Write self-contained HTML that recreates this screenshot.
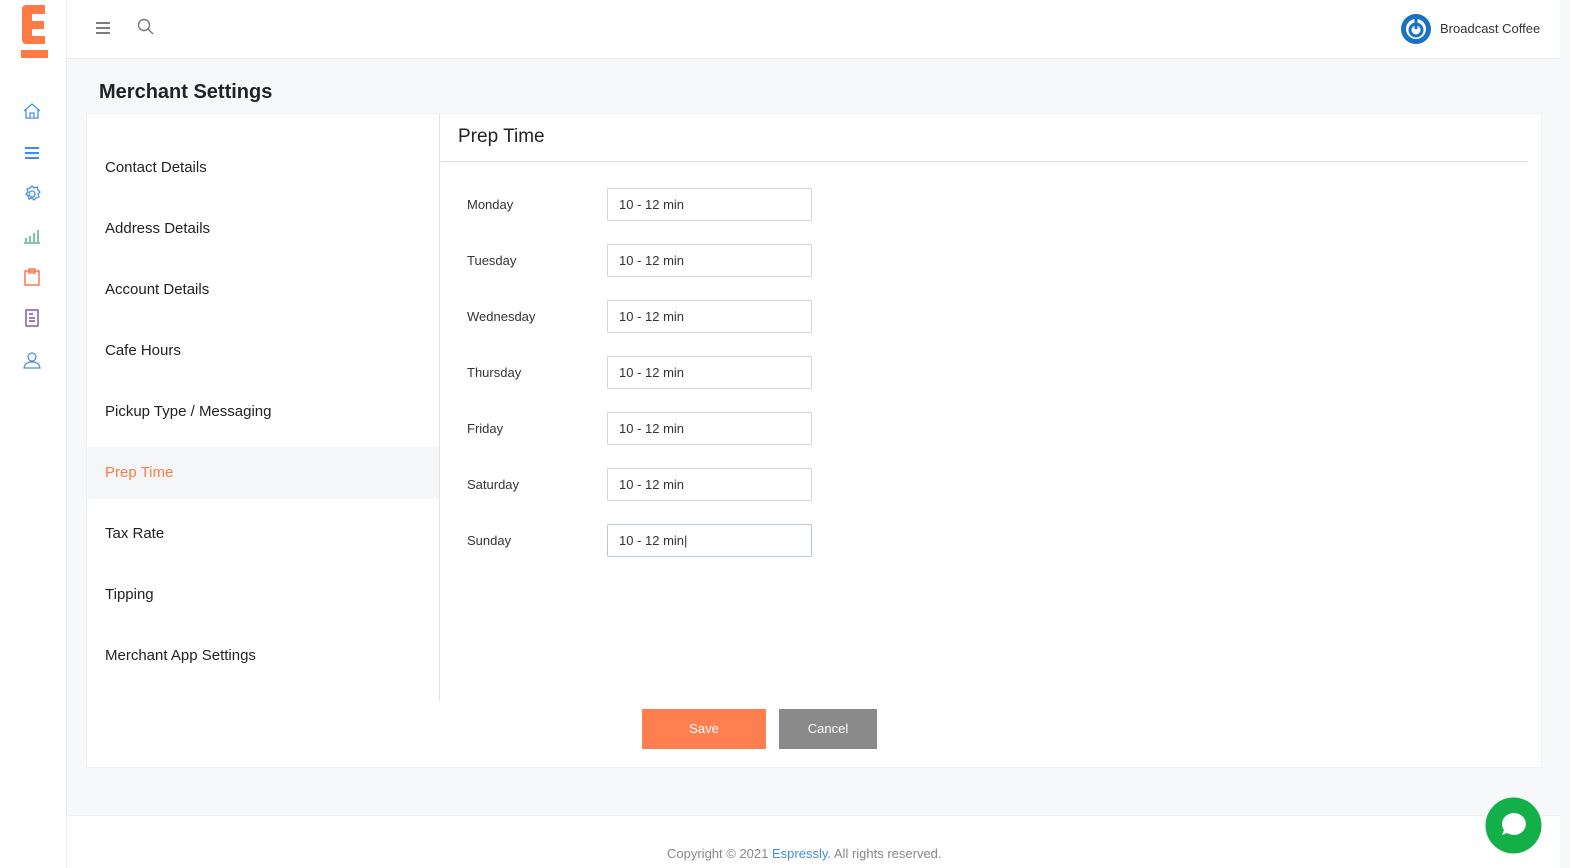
<!DOCTYPE html>
<html><head><meta charset="utf-8"><style>
*{box-sizing:border-box;margin:0;padding:0}
body{width:1570px;height:868px;overflow:hidden;background:#f7f8fa;font-family:"Liberation Sans",Arial,sans-serif;color:#222;position:relative}
.side{position:absolute;left:0;top:0;width:67px;height:868px;background:#fff;border-right:1px solid #eceef2}
.top{position:absolute;left:67px;top:0;width:1493px;height:59px;background:#fff;border-bottom:1px solid #eceef2}
.ic{position:absolute;left:22px}
.card{position:absolute;left:86px;top:113px;width:1456px;height:655px;background:#fff;border:1px solid #eef0f3}
.menu{position:absolute;left:0;top:0;width:353px;height:587px;border-right:1px solid #e3e3e3}
.mi{position:absolute;left:0;width:352px;height:52px;line-height:52px;padding-left:18px;font-size:15px;color:#222}
.row{position:absolute;left:380px;font-size:13px;color:#333}
.inp{position:absolute;left:520px;width:205px;height:33px;border:1px solid #d3d6db;border-radius:2px;font-size:13px;line-height:31px;padding-left:11px;color:#333}
.btn{position:absolute;top:595px;height:40px;line-height:40px;text-align:center;color:#fff;font-size:13px}
</style></head><body>
<div class="side">
<svg style="position:absolute;left:20px;top:4px" width="28" height="54"><path d="M6 1h19v9H12v7h12v8H12v7h13v8H6a4 4 0 0 1-4-4V5a4 4 0 0 1 4-4z" fill="#ff7a45"/><rect x="1" y="46" width="27" height="8" fill="#ff7a45"/></svg>
<svg class="ic" style="top:101px" width="20" height="20" fill="none" stroke="#4a90e2" stroke-width="1.3"><path d="M2 10L10 3l8 7M4 8v9h12V8M8 17v-5h4v5"/></svg>
<svg class="ic" style="top:144px" width="20" height="18" stroke="#3d8ee8" stroke-width="2"><path d="M3 4h14M3 9h14M3 14h14"/></svg>
<svg class="ic" style="top:184px" width="20" height="20" fill="none" stroke="#4a90e2" stroke-width="1.3"><circle cx="10" cy="10" r="3"/><path d="M10 2l2 2 3-1 1 3 2 2-2 2 1 3-3 1-2 2-2-2-3 1-1-3-2-2 2-2-1-3 3-1z"/></svg>
<svg class="ic" style="top:226px" width="20" height="20" fill="none" stroke="#3aa57a" stroke-width="1.3"><path d="M2 17h16M4 16v-4M8 16v-6M12 16v-9M16 16V4"/></svg>
<svg class="ic" style="top:267px" width="20" height="20" fill="none" stroke="#ff6b4a" stroke-width="1.4"><rect x="3" y="4" width="14" height="14"/><rect x="7" y="2" width="6" height="4"/></svg>
<svg class="ic" style="top:308px" width="20" height="20" fill="none" stroke="#7b4ab8" stroke-width="1.4"><rect x="4" y="2" width="12" height="16"/><path d="M7 6h4M7 10h6M7 13h6"/></svg>
<svg class="ic" style="top:350px" width="20" height="20" fill="none" stroke="#4a90e2" stroke-width="1.3"><circle cx="10" cy="7" r="4"/><path d="M2 18c1-5 4-6 8-6s7 1 8 6z"/></svg>
</div>
<div class="top">
<svg style="position:absolute;left:28px;top:21px" width="16" height="14" stroke="#555" stroke-width="1.5"><path d="M1 2h14M1 7h14M1 12h14"/></svg>
<svg style="position:absolute;left:70px;top:18px" width="18" height="18" fill="none" stroke="#777" stroke-width="1.4"><circle cx="7" cy="7" r="5.5"/><path d="M11 11l5 5"/></svg>
<svg style="position:absolute;left:1333px;top:13px" width="32" height="32"><circle cx="16" cy="16" r="15" fill="#1a73c2"/><circle cx="16" cy="16" r="10" fill="#fff"/><circle cx="16" cy="17" r="6" fill="none" stroke="#1a73c2" stroke-width="3"/><rect x="14.5" y="6" width="3" height="10" fill="#1a73c2"/></svg>
<div style="position:absolute;left:1373px;top:21px;font-size:13px;color:#333">Broadcast Coffee</div>
</div>
<div style="position:absolute;left:99px;top:81px;font-size:20px;font-weight:bold;color:#222">Merchant Settings</div>
<div class="card">
<div class="menu">
<div class="mi" style="top:28px">Contact Details</div>
<div class="mi" style="top:89px">Address Details</div>
<div class="mi" style="top:150px">Account Details</div>
<div class="mi" style="top:211px">Cafe Hours</div>
<div class="mi" style="top:272px">Pickup Type / Messaging</div>
<div class="mi" style="top:333px;background:#f5f6f8;color:#ff7a45">Prep Time</div>
<div class="mi" style="top:394px">Tax Rate</div>
<div class="mi" style="top:455px">Tipping</div>
<div class="mi" style="top:516px">Merchant App Settings</div>
</div>
<div style="position:absolute;left:371px;top:12px;font-size:19px;color:#222">Prep Time</div>
<div style="position:absolute;left:354px;top:47px;width:1087px;height:1px;background:#ddd"></div>
<div class="row" style="top:83px">Monday</div><div class="inp" style="top:74px">10 - 12 min</div>
<div class="row" style="top:139px">Tuesday</div><div class="inp" style="top:130px">10 - 12 min</div>
<div class="row" style="top:195px">Wednesday</div><div class="inp" style="top:186px">10 - 12 min</div>
<div class="row" style="top:251px">Thursday</div><div class="inp" style="top:242px">10 - 12 min</div>
<div class="row" style="top:307px">Friday</div><div class="inp" style="top:298px">10 - 12 min</div>
<div class="row" style="top:363px">Saturday</div><div class="inp" style="top:354px">10 - 12 min</div>
<div class="row" style="top:419px">Sunday</div><div class="inp" style="top:410px;border-color:#b9c6d8">10 - 12 min|</div>
<div class="btn" style="left:555px;width:124px;background:#ff7f50">Save</div>
<div class="btn" style="left:692px;width:98px;background:#8a8a8a">Cancel</div>
</div>
<div style="position:absolute;left:67px;top:815px;width:1493px;height:53px;background:#fff;border-top:1px solid #eceef2"></div>
<div style="position:absolute;left:667px;top:846px;font-size:13px;color:#888">Copyright © 2021 <span style="color:#3d8ee8">Espressly.</span> All rights reserved.</div>
<svg style="position:absolute;left:1485px;top:797px" width="57" height="57"><circle cx="28.5" cy="28.5" r="28" fill="#13b04a"/><path d="M28 16a12 11 0 1 1-6 20l-5 2 2-5a12 11 0 0 1 9-17z" fill="#fff"/></svg>
</body></html>
